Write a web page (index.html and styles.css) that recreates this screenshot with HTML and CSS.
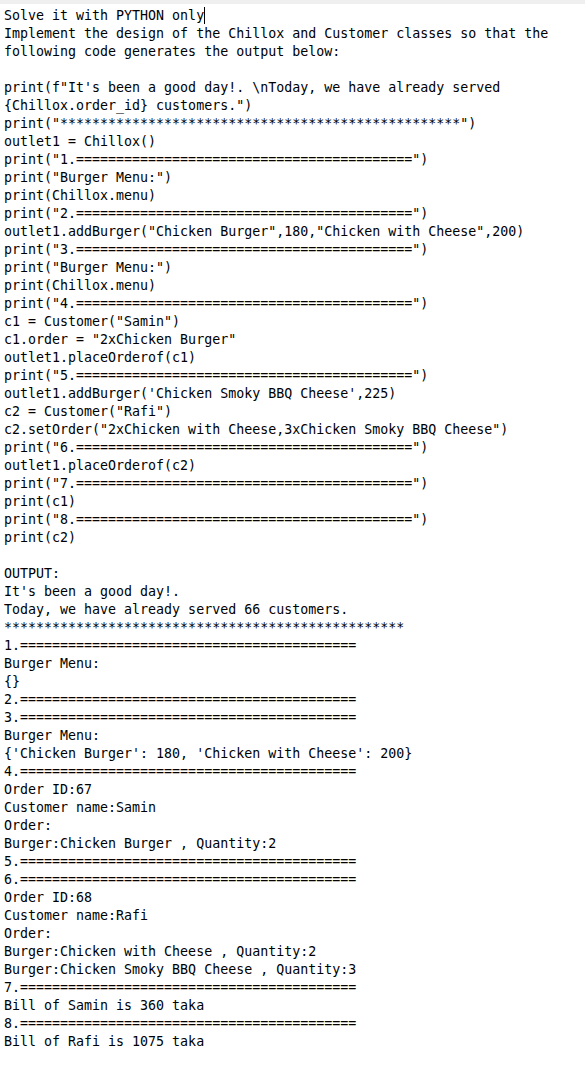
FILE: index.html
```html
<!DOCTYPE html>
<html>
<head>
<meta charset="utf-8">
<link rel="stylesheet" href="styles.css">
</head>
<body>
<div class="topbar"></div>
<pre class="doc">Solve it with PYTHON only<span class="caret"></span>
Implement the design of the Chillox and Customer classes so that the
following code generates the output below:

print(f"It's been a good day!. \nToday, we have already served
{Chillox.order_id} customers.")
print("**************************************************")
outlet1 = Chillox()
print("1.==========================================")
print("Burger Menu:")
print(Chillox.menu)
print("2.==========================================")
outlet1.addBurger("Chicken Burger",180,"Chicken with Cheese",200)
print("3.==========================================")
print("Burger Menu:")
print(Chillox.menu)
print("4.==========================================")
c1 = Customer("Samin")
c1.order = "2xChicken Burger"
outlet1.placeOrderof(c1)
print("5.==========================================")
outlet1.addBurger('Chicken Smoky BBQ Cheese',225)
c2 = Customer("Rafi")
c2.setOrder("2xChicken with Cheese,3xChicken Smoky BBQ Cheese")
print("6.==========================================")
outlet1.placeOrderof(c2)
print("7.==========================================")
print(c1)
print("8.==========================================")
print(c2)

OUTPUT:
It's been a good day!.
Today, we have already served 66 customers.
**************************************************
1.==========================================
Burger Menu:
{}
2.==========================================
3.==========================================
Burger Menu:
{'Chicken Burger': 180, 'Chicken with Cheese': 200}
4.==========================================
Order ID:67
Customer name:Samin
Order:
Burger:Chicken Burger , Quantity:2
5.==========================================
6.==========================================
Order ID:68
Customer name:Rafi
Order:
Burger:Chicken with Cheese , Quantity:2
Burger:Chicken Smoky BBQ Cheese , Quantity:3
7.==========================================
Bill of Samin is 360 taka
8.==========================================
Bill of Rafi is 1075 taka</pre>
</body>
</html>
```
FILE: styles.css
```css
html, body {
  margin: 0;
  padding: 0;
  background: #ffffff;
}
.topbar {
  height: 4px;
  background: #efefef;
}
.doc {
  margin: 0;
  padding: 3px 0 0 4px;
  font-family: "DejaVu Sans Mono", monospace;
  font-size: 13.3px;
  line-height: 18px;
  color: #000000;
  white-space: pre;
}
.caret {
  display: inline-block;
  width: 0;
  height: 17px;
  border-left: 1px solid #000;
  vertical-align: -4px;
}
```
